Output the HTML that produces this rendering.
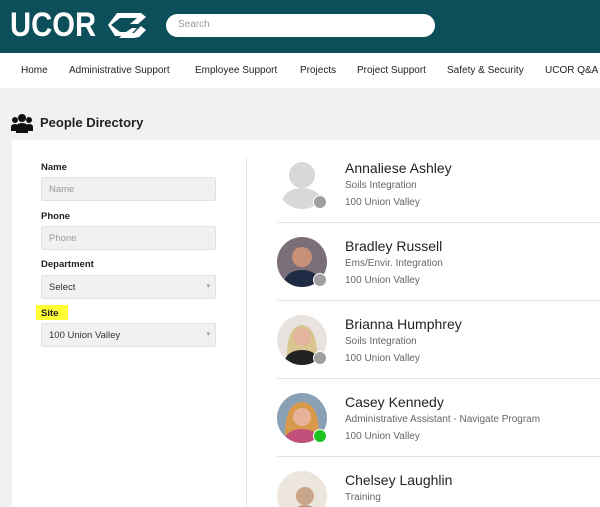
<!DOCTYPE html>
<html><head><style>
*{margin:0;padding:0;box-sizing:border-box}
html,body{width:600px;height:507px;overflow:hidden}
body{background:#f1f1f1;font-family:"Liberation Sans",sans-serif;position:relative;color:#222}
.hdr{position:absolute;left:0;top:0;width:600px;height:53px;background:#0c4e59}
.logo{position:absolute;left:10px;top:6px;color:#fff;font-size:34px;font-weight:bold;transform:scaleX(0.86);transform-origin:left top}
.search{position:absolute;left:166px;top:14px;width:269px;height:23px;background:#fff;border-radius:12px;font-size:10px;color:#999;padding:5px 12px}
.nav{position:absolute;left:0;top:53px;width:600px;height:35px;background:#fff;font-size:10px;color:#222}
.nav span{position:absolute;top:12px}
.title{position:absolute;left:40px;top:115px;font-size:13px;font-weight:bold;color:#222}
.card{position:absolute;left:12px;top:140px;width:588px;height:367px;background:#fff}
.lbl{position:absolute;left:41px;font-size:9.5px;font-weight:bold;color:#222}
.inp{position:absolute;left:41px;width:175px;height:24px;background:#f1f1f1;border:1px solid #e2e2e2;border-radius:2px;font-size:9.5px;padding:6px 7px;color:#999}
.sel{color:#333}
.sel:after{content:"▾";position:absolute;right:5px;top:6px;font-size:7px;color:#999}
.div{position:absolute;left:246px;top:158px;width:1px;height:349px;background:#e6e6e6}
.av{position:absolute;left:277px;width:50px;height:50px;border-radius:50%;overflow:hidden}
.dot{position:absolute;width:14px;height:14px;border-radius:50%;background:#a0a0a0;border:1px solid #fff}
.nm{position:absolute;left:345px;font-size:14px;color:#222}
.sub{position:absolute;left:345px;font-size:10px;color:#666}
.hr{position:absolute;left:277px;width:323px;height:1px;background:#e4e4e4}
</style></head><body>
<div class="hdr">
<div class="logo">UCOR</div>
<svg style="position:absolute;left:107px;top:11px" width="40" height="29" viewBox="0 0 40 29"><path d="M10 2H34L39 6L31 13H23L30 7H13L4 14L13 21H19L25 17H30L22 25H8L1 14Z" fill="#fff"/><path d="M27 27H12L18 22H27L34 15L39 19L32 26Z" fill="#fff"/></svg>
<div class="search">Search</div>
</div>
<div class="nav">
<span style="left:21px">Home</span><span style="left:69px">Administrative Support</span><span style="left:195px">Employee Support</span><span style="left:300px">Projects</span><span style="left:357px">Project Support</span><span style="left:447px">Safety &amp; Security</span><span style="left:545px">UCOR Q&amp;A</span>
</div>
<svg style="position:absolute;left:11px;top:113px" width="22" height="20" viewBox="0 0 22 20"><circle cx="11" cy="5" r="4" fill="#111"/><circle cx="4" cy="7" r="3" fill="#111"/><circle cx="18" cy="7" r="3" fill="#111"/><path d="M5 20V15Q5 10 11 10Q17 10 17 15V20Z" fill="#111"/><path d="M0 18V14Q0 11 4 11Q6 11 6 12V18ZM22 18V14Q22 11 18 11Q16 11 16 12V18Z" fill="#111"/></svg>
<div class="title">People Directory</div>
<div class="card"></div>
<div class="lbl" style="top:162px">Name</div>
<div class="inp" style="top:177px">Name</div>
<div class="lbl" style="top:211px">Phone</div>
<div class="inp" style="top:226px">Phone</div>
<div class="lbl" style="top:259px">Department</div>
<div class="inp sel" style="top:275px">Select</div>
<div style="position:absolute;left:36px;top:305px;width:32px;height:15px;background:#ffff33"></div>
<div class="lbl" style="top:308px">Site</div>
<div class="inp sel" style="top:323px">100 Union Valley</div>
<div class="div"></div>

<div class="av" style="top:159px;background:#fff"><svg width="50" height="50"><circle cx="25" cy="16" r="13" fill="#d8d8d8"/><path d="M3 50Q5 29 25 29Q45 29 47 50Z" fill="#d8d8d8"/></svg></div>
<div class="dot" style="left:313px;top:195px"></div>
<div class="nm" style="top:160px">Annaliese Ashley</div>
<div class="sub" style="top:180px">Soils Integration</div>
<div class="sub" style="top:197px">100 Union Valley</div>
<div class="hr" style="top:222px"></div>

<div class="av" style="top:237px;background:#7a6f78"><svg width="50" height="50"><circle cx="25" cy="20" r="10" fill="#c99078"/><path d="M5 50Q8 33 25 33Q42 33 45 50Z" fill="#1f2b45"/></svg></div>
<div class="dot" style="left:313px;top:273px"></div>
<div class="nm" style="top:238px">Bradley Russell</div>
<div class="sub" style="top:258px">Ems/Envir. Integration</div>
<div class="sub" style="top:275px">100 Union Valley</div>
<div class="hr" style="top:300px"></div>

<div class="av" style="top:315px;background:#e8e3de"><svg width="50" height="50"><path d="M10 40Q10 12 25 10Q40 12 40 40Z" fill="#d9c58f"/><circle cx="25" cy="22" r="9" fill="#e3b49e"/><path d="M6 50Q9 35 25 35Q41 35 44 50Z" fill="#222"/></svg></div>
<div class="dot" style="left:313px;top:351px"></div>
<div class="nm" style="top:316px">Brianna Humphrey</div>
<div class="sub" style="top:336px">Soils Integration</div>
<div class="sub" style="top:353px">100 Union Valley</div>
<div class="hr" style="top:378px"></div>

<div class="av" style="top:393px;background:#8aa1b5"><svg width="50" height="50"><path d="M8 42Q8 10 25 9Q42 10 42 42Z" fill="#d89a4a"/><circle cx="25" cy="24" r="9" fill="#e6b39a"/><path d="M6 50Q9 36 25 36Q41 36 44 50Z" fill="#c0507a"/></svg></div>
<div class="dot" style="left:313px;top:429px;background:#1ec41e"></div>
<div class="nm" style="top:394px">Casey Kennedy</div>
<div class="sub" style="top:414px">Administrative Assistant - Navigate Program</div>
<div class="sub" style="top:431px">100 Union Valley</div>
<div class="hr" style="top:456px"></div>

<div class="av" style="top:471px;background:#ece6df"><svg width="50" height="50"><circle cx="28" cy="25" r="9" fill="#c9a58a"/><path d="M12 50Q15 34 28 34Q41 34 44 50Z" fill="#b89a80"/></svg></div>
<div class="nm" style="top:472px">Chelsey Laughlin</div>
<div class="sub" style="top:492px">Training</div>
</body></html>
